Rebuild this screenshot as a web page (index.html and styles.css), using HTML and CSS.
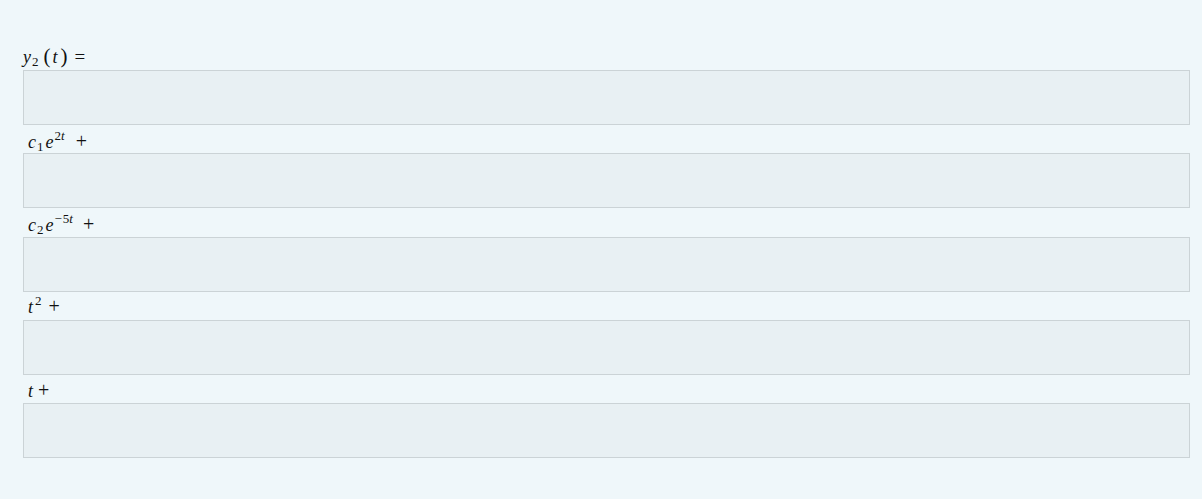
FILE: index.html
```html
<!DOCTYPE html>
<html>
<head>
<meta charset="utf-8">
<link rel="stylesheet" href="styles.css">
</head>
<body>
<div class="page">
  <div class="item">
    <div class="label l1"><i>y</i><sub>2</sub><span class="paren po">(</span><i class="pt">t</i><span class="paren pc">)</span><span class="op eq">=</span></div>
    <div class="box"></div>
  </div>
  <div class="item">
    <div class="label l2"><i>c</i><sub>1</sub><i class="ex">e</i><sup>2<i>t</i></sup><span class="op plus2">+</span></div>
    <div class="box"></div>
  </div>
  <div class="item">
    <div class="label l3"><i>c</i><sub>2</sub><i class="ex">e</i><sup><span class="minus">−</span>5<i>t</i></sup><span class="op plus3">+</span></div>
    <div class="box"></div>
  </div>
  <div class="item">
    <div class="label l4"><i>t</i><sup class="sq">2</sup><span class="op plus4">+</span></div>
    <div class="box"></div>
  </div>
  <div class="item">
    <div class="label l5"><i>t</i><span class="op plus5">+</span></div>
    <div class="box"></div>
  </div>
</div>
</body>
</html>
```

FILE: styles.css
```css
html, body {
  margin: 0;
  padding: 0;
  background: #eff7fa;
}
.page {
  padding: 41.67px 12px 0 23px;
  width: 1167px;
  display: flex;
  flex-direction: column;
}
.item {
  display: flex;
  flex-direction: column;
}
.label {
  height: 28.33px;
  box-sizing: border-box;
  padding-top: 5px;
  padding-left: 5px;
  line-height: 20px;
  font-family: "Liberation Serif", serif;
  font-size: 18px;
  color: #111;
  white-space: nowrap;
}
.label.l1 {
  padding-left: 0;
  padding-top: 4.5px;
  font-size: 18px;
}
.label.l2 { padding-top: 6.5px; }
.label.l3 { padding-top: 6px; }
.label.l4 { padding-top: 4.5px; }
.label.l5 { padding-top: 5.5px; }
.label i {
  font-style: italic;
}
.label sub {
  font-size: 13px;
  vertical-align: -3px;
  line-height: 0;
  margin-left: 1px;
}
.label sup {
  font-size: 13px;
  vertical-align: 8px;
  line-height: 0;
  margin-left: 1px;
}
.label sup.sq {
  margin-left: 2px;
}
.ex {
  margin-left: 2px;
}
.minus {
  margin-right: 1px;
}
.paren {
  font-size: 21px;
  font-style: normal;
}
.po { margin-left: 5px; }
.pt { margin-left: 2px; }
.pc { margin-left: 3px; }
.op {
  font-family: "Liberation Serif", serif;
  font-style: normal;
  font-size: 20px;
}
.eq { margin-left: 7px; font-size: 19px; }
.plus2 { margin-left: 11px; }
.plus3 { margin-left: 10px; }
.plus4 { margin-left: 7px; }
.plus5 { margin-left: 5px; }
.box {
  height: 55px;
  box-sizing: border-box;
  background: #e8f0f3;
  border: 1px solid #cbd3d6;
}
```
